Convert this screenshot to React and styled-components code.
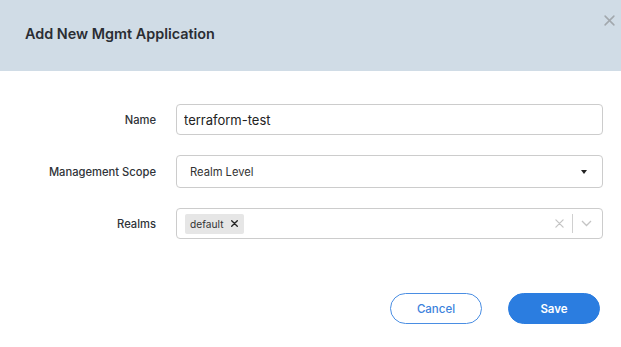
import React from 'react';
import styled, { createGlobalStyle } from 'styled-components';

const GlobalStyle = createGlobalStyle`
  html, body {
    margin: 0;
    padding: 0;
    background: #fff;
    font-family: Inter, "Noto Sans", sans-serif;
  }
`;

function CloseIcon({ size = 10, color = '#999', width = 1.5 }) {
  return (
    <svg width={size} height={size} viewBox="0 0 10 10">
      <path d="M1 1L9 9M9 1L1 9" stroke={color} strokeWidth={width} strokeLinecap="round" />
    </svg>
  );
}

function App() {
  return (
    <>
      <GlobalStyle />
      <Modal>
        <Header>
          <Title>Add New Mgmt Application</Title>
          <CloseButton aria-label="close">
            <CloseIcon size={11} color="#a2a8ad" width={1.4} />
          </CloseButton>
        </Header>
        <Body>
          <Row>
            <Label>Name</Label>
            <TextInput defaultValue="terraform-test" />
          </Row>
          <Row>
            <Label>Management Scope</Label>
            <Select>
              <SelectValue>Realm Level</SelectValue>
              <Caret />
            </Select>
          </Row>
          <Row>
            <Label>Realms</Label>
            <MultiSelect>
              <Chips>
                <Chip>
                  default
                  <ChipRemove>
                    <CloseIcon size={7} color="#222" width={1.9} />
                  </ChipRemove>
                </Chip>
              </Chips>
              <Indicators>
                <CloseIcon size={9} color="#c4c4c4" width={1.4} />
                <Separator />
                <svg width="11" height="7" viewBox="0 0 11 7">
                  <path d="M1 1L5.5 5.5L10 1" stroke="#c4c4c4" strokeWidth="1.3" fill="none" />
                </svg>
              </Indicators>
            </MultiSelect>
          </Row>
        </Body>
        <Footer>
          <Button>Cancel</Button>
          <Button primary>Save</Button>
        </Footer>
      </Modal>
    </>
  );
}

const Modal = styled.div`
  width: 621px;
  height: 347px;
  display: flex;
  flex-direction: column;
  background: #fff;
`;

const Header = styled.div`
  position: relative;
  height: 71px;
  background: #d0dce6;
  display: flex;
  align-items: center;
  padding: 0 25px 5px;
  box-sizing: border-box;
`;

const Title = styled.h2`
  margin: 0;
  font-size: 14.4px;
  font-weight: 600;
  color: #2a2d33;
`;

const CloseButton = styled.button`
  position: absolute;
  top: 14px;
  right: 6px;
  border: 0;
  background: none;
  padding: 0;
  width: 12px;
  height: 12px;
  display: flex;
  align-items: center;
  justify-content: center;
`;

const Body = styled.div`
  display: flex;
  flex-direction: column;
  gap: 20px;
  padding: 33px 18px 0 0;
`;

const Row = styled.div`
  display: grid;
  grid-template-columns: 156px 1fr;
  column-gap: 20px;
  align-items: center;
`;

const Label = styled.label`
  text-align: right;
  font-size: 11.2px;
  font-weight: 500;
  color: #2f3338;
`;

const fieldBase = `
  box-sizing: border-box;
  border: 1px solid #cccccc;
  border-radius: 4px;
  background: #fff;
`;

const TextInput = styled.input`
  ${fieldBase}
  height: 31px;
  width: 100%;
  padding: 0 7px;
  font-family: Inter, "Noto Sans", sans-serif;
  font-size: 13px;
  color: #222;
  outline: none;
`;

const Select = styled.div`
  ${fieldBase}
  height: 33px;
  display: flex;
  align-items: center;
  justify-content: space-between;
  padding: 0 15px 0 13px;
`;

const SelectValue = styled.span`
  font-size: 11.2px;
  color: #333;
`;

const Caret = styled.span`
  width: 0;
  height: 0;
  border-left: 3.5px solid transparent;
  border-right: 3.5px solid transparent;
  border-top: 4px solid #222;
`;

const MultiSelect = styled.div`
  ${fieldBase}
  height: 31px;
  display: flex;
  align-items: center;
  justify-content: space-between;
  padding: 0 10px 0 8px;
`;

const Chips = styled.div`
  display: flex;
  gap: 4px;
`;

const Chip = styled.span`
  display: inline-flex;
  align-items: center;
  gap: 8px;
  height: 20px;
  padding: 0 6px 0 5px;
  background: #e6e6e6;
  border-radius: 2px;
  font-size: 10.2px;
  color: #333;
`;

const ChipRemove = styled.span`
  display: inline-flex;
`;

const Indicators = styled.div`
  display: flex;
  align-items: center;
  gap: 8px;
`;

const Separator = styled.span`
  width: 1px;
  height: 19px;
  background: #d0d0d0;
`;

const Footer = styled.div`
  display: flex;
  justify-content: flex-end;
  gap: 26px;
  padding: 54px 21px 0 0;
`;

const Button = styled.button`
  width: 92px;
  height: 31px;
  border-radius: 16px;
  font-family: Inter, "Noto Sans", sans-serif;
  font-size: 11.5px;
  font-weight: ${(p) => (p.primary ? 600 : 500)};
  border: 1px solid ${(p) => (p.primary ? '#2b7de0' : '#4a8ee3')};
  background: ${(p) => (p.primary ? '#2b7de0' : '#fff')};
  color: ${(p) => (p.primary ? '#fff' : '#3b82dc')};
`;

export default App;
